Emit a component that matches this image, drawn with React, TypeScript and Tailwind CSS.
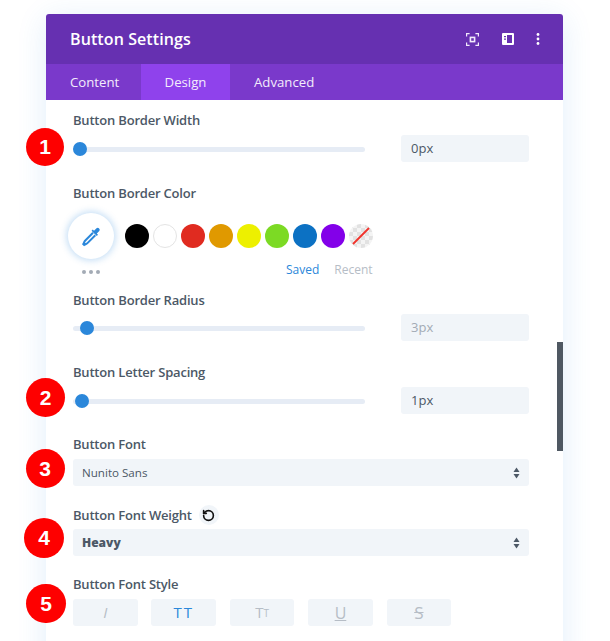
import React from 'react';
import { RotateCcw } from 'lucide-react';

const swatches = ['bg-[#000000]', 'bg-white border border-[#e4e4e4]', 'bg-[#e02b20]', 'bg-[#e09900]', 'bg-[#edf000]', 'bg-[#7cda24]', 'bg-[#0c71c3]', 'bg-[#8300e9]'];

const Label: React.FC<{ className: string; children: React.ReactNode }> = ({ className, children }) => (
  <div className={`h-[18px] flex items-center text-[13px] leading-[18px] font-semibold tracking-[-0.2px] text-[#4c5866] ${className}`}>{children}</div>
);

const Slider: React.FC<{ className: string; thumb: string; value: string; muted?: boolean }> = ({ className, thumb, value, muted }) => (
  <div className={`h-[27px] flex items-center justify-between ${className}`}>
    <div className="relative w-[292px] h-[5px] mt-[2px] rounded-[3px] bg-[#e6ecf5]">
      <div className={`absolute top-[-5px] w-[14px] h-[14px] rounded-full bg-[#2b87da] ${thumb}`} />
    </div>
    <div className={`w-[128px] h-[27px] flex items-center pl-[10px] rounded-[3px] bg-[#f1f5f9] text-[13px] ${muted ? 'text-[#a3abb5]' : 'text-[#4c5866]'}`}>{value}</div>
  </div>
);

const SelectBox: React.FC<{ className: string; bold?: boolean; children: React.ReactNode }> = ({ className, bold, children }) => (
  <div className={`h-[27px] flex items-center justify-between pl-[9px] pr-[9px] rounded-[3px] bg-[#f1f5f9] text-[#4c5866] ${bold ? 'text-[12px] font-extrabold' : 'text-[11.6px] font-medium'} ${className}`}>
    <span>{children}</span>
    <svg width="7" height="12" viewBox="0 0 7 12" className="fill-[#4c5866]">
      <path d="M3.500 0.500 6.500 5H0.500Z" />
      <path d="M3.500 11.500 0.500 7H6.500Z" />
    </svg>
  </div>
);

const StyleButton: React.FC<{ className?: string; children: React.ReactNode }> = ({ className, children }) => (
  <div className={`w-[64.600px] h-[27px] rounded-[3px] bg-[#f1f5f9] flex items-center justify-center ${className ?? ''}`}>{children}</div>
);

const Badge: React.FC<{ className: string; n: number }> = ({ className, n }) => (
  <div className={`absolute rounded-full bg-[#fe0000] flex items-center justify-center text-white text-[21px] font-bold font-['Liberation_Sans',sans-serif] ${className}`}>{n}</div>
);

export default function App() {
  return (
    <div className="relative w-[610px] h-[641px] overflow-hidden bg-white font-['Open_Sans',sans-serif]">
      <div className="absolute left-[46px] top-[14px] w-[517px] h-[700px] rounded-t-[3px] shadow-[0_5px_30px_rgba(43,135,218,0.14)]" />
      <div className="relative ml-[46px] pt-[14px] w-[517px]">
        {/* Header */}
        <div className="h-[50px] flex items-center justify-between pl-[24px] pr-[23px] rounded-t-[3px] bg-[#6630b1] text-white">
          <span className="text-[16px] font-semibold tracking-[0.1px]">Button Settings</span>
          <div className="flex items-center">
            <svg width="13" height="13" viewBox="0 0 13 13" fill="none" stroke="#f1e9fb" strokeWidth="1.2" className="mr-[23px]">
              <path d="M.6 3.500V.6h3M9.400.6h3v2.900M12.400 9.500v2.900h-3M3.600 12.400h-3V9.500" />
              <rect x="4.400" y="4.400" width="4.200" height="4.200" strokeWidth="1.600" />
            </svg>
            <svg width="12" height="12" viewBox="0 0 12 12" className="mr-[22px]">
              <path fill="#ffffff" fillRule="evenodd" d="M1 0h10a1 1 0 0 1 1 1v10a1 1 0 0 1-1 1H1a1 1 0 0 1-1-1V1a1 1 0 0 1 1-1ZM5 2v8h5V2ZM2 3h2v1.200H2ZM2 5.500h2v1.200H2Z" />
            </svg>
            <svg width="4" height="12" viewBox="0 0 4 12" fill="#ffffff">
              <circle cx="2" cy="1.500" r="1.400" />
              <circle cx="2" cy="6" r="1.400" />
              <circle cx="2" cy="10.500" r="1.400" />
            </svg>
          </div>
        </div>

        {/* Tabs */}
        <div className="h-[36px] flex bg-[#7a39cb] text-[13.2px] font-medium text-[#f3ecfc]">
          <div className="w-[95px] flex items-center pl-[24px] pt-[1px]">Content</div>
          <div className="w-[89px] flex items-center justify-center pt-[1px] bg-[#8f42ec]">Design</div>
          <div className="flex items-center pl-[24px] pt-[1px]">Advanced</div>
        </div>

        {/* Options */}
        <div className="relative h-[541px] bg-white pl-[27px] pr-[34px] pt-[11px]">
          <Label className="">Button Border Width</Label>
          <Slider className="mt-[6px]" thumb="left-0" value="0px" />

          <Label className="mt-[22px]">Button Border Color</Label>
          <div className="mt-[11px] h-[46px] flex items-center">
            <div className="w-[46px] h-[46px] ml-[-5px] rounded-full bg-white flex items-center justify-center shadow-[0_0_6px_2px_rgba(43,135,218,0.25)]">
              <svg width="21" height="21" viewBox="0 0 21 21" fill="none">
                <path d="M11 5.200 15.800 10 17 8.800 15.800 7.600 18.300 5.100a2 2 0 0 0-2.800-2.800L13 4.800 11.800 3.600 10.600 4.800Z" fill="#2b87da" />
                <path d="M12 6.800 4.300 14.500c-1 1-1 2-2 3.500l.9.900c1.500-1 2.500-1 3.500-2L14.300 9.200" stroke="#2b87da" strokeWidth="2" />
              </svg>
            </div>
            <div className="flex gap-[4px] ml-[11px]">
              {swatches.map((s) => (
                <div key={s} className={`w-[24px] h-[24px] rounded-full ${s}`} />
              ))}
              <svg width="24" height="24" viewBox="0 0 24 24">
                <defs>
                  <pattern id="chk" width="8" height="8" patternUnits="userSpaceOnUse">
                    <rect width="8" height="8" fill="#f4f4f4" />
                    <rect width="4" height="4" fill="#e2e2e2" />
                    <rect x="4" y="4" width="4" height="4" fill="#e2e2e2" />
                  </pattern>
                </defs>
                <circle cx="12" cy="12" r="12" fill="url(#chk)" />
                <path d="M4 20 20 4" stroke="#f0342c" strokeWidth="2" />
              </svg>
            </div>
          </div>
          <div className="mt-[4px] h-[14px] flex items-center text-[12px] font-medium">
            <div className="flex gap-[3px] ml-[9px] mt-[3px]">
              <span className="w-[4px] h-[4px] rounded-full bg-[#a3abb5]" />
              <span className="w-[4px] h-[4px] rounded-full bg-[#a3abb5]" />
              <span className="w-[4px] h-[4px] rounded-full bg-[#a3abb5]" />
            </div>
            <span className="ml-[186px] text-[#2b87da]">Saved</span>
            <span className="ml-[15px] text-[#b6bdc6]">Recent</span>
          </div>

          <Label className="mt-[14px]">Button Border Radius</Label>
          <Slider className="mt-[5px]" thumb="left-[7px]" value="3px" muted />

          <Label className="mt-[22px]">Button Letter Spacing</Label>
          <Slider className="mt-[6px]" thumb="left-[2px]" value="1px" />

          <Label className="mt-[21px]">Button Font</Label>
          <SelectBox className="mt-[6px]">Nunito Sans</SelectBox>

          <div className="mt-[20px] h-[18px] flex items-center">
            <Label className="">Button Font Weight</Label>
            <div className="ml-[7px] w-[20px] h-[20px] rounded-full bg-[#f1f5f9] flex items-center justify-center">
              <RotateCcw size={13} strokeWidth={3} color="#111111" />
            </div>
          </div>
          <SelectBox className="mt-[5px]" bold>Heavy</SelectBox>

          <Label className="mt-[19px]">Button Font Style</Label>
          <div className="mt-[6px] flex gap-[13.800px] text-[15px] text-[#b6bdc6]">
            <StyleButton className="italic">I</StyleButton>
            <StyleButton className="tracking-[2px] text-[#2b87da]">TT</StyleButton>
            <StyleButton>T<span className="text-[10px] mt-[2px]">T</span></StyleButton>
            <StyleButton className="underline text-[16px]">U</StyleButton>
            <StyleButton className="line-through text-[17px]">S</StyleButton>
          </div>

          {/* Scrollbar */}
          <div className="absolute right-0 top-[242px] w-[6px] h-[109px] bg-[#4f5862]" />
        </div>
      </div>

      <Badge className="left-[26px] top-[128px] w-[38px] h-[38px]" n={1} />
      <Badge className="left-[26px] top-[378px] w-[39px] h-[39px]" n={2} />
      <Badge className="left-[25.500px] top-[449px] w-[39px] h-[39px]" n={3} />
      <Badge className="left-[24px] top-[518px] w-[40px] h-[40px]" n={4} />
      <Badge className="left-[26px] top-[584px] w-[40px] h-[39px]" n={5} />
    </div>
  );
}
